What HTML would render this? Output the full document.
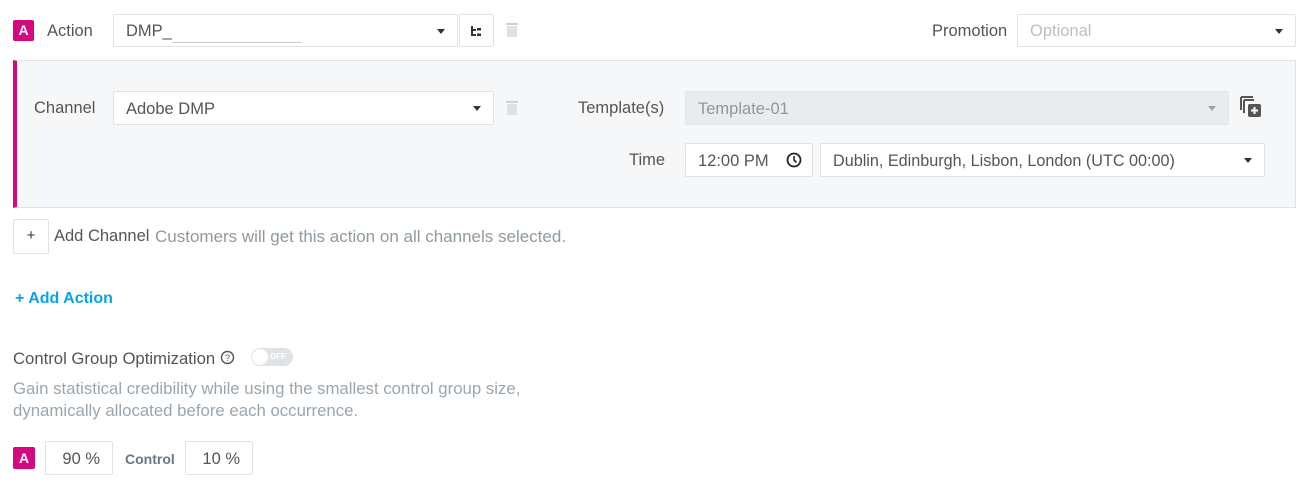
<!DOCTYPE html>
<html><head><style>
*{box-sizing:border-box}
body{margin:0;width:1306px;height:488px;background:#fff;font-family:"Liberation Sans",sans-serif;color:#555;position:relative;overflow:hidden;font-size:16px}
.a{position:absolute}
.badge{background:#d4097f;color:#fff;font-weight:bold;font-size:14px;text-align:center;border-radius:2px}
.sel{position:absolute;border:1px solid #dfe3e6;background:#fff;border-radius:2px;color:#555;padding-left:12px;padding-top:2px;display:flex;align-items:center;font-size:16.5px}
.car{position:absolute;right:12px;top:50%;margin-top:-2px;width:0;height:0;border-left:4px solid transparent;border-right:4px solid transparent;border-top:5px solid #333}
.lbl{position:absolute;font-size:16.5px;color:#555}
</style></head><body>
<div class="a badge" style="left:13px;top:20px;width:21px;height:21px;line-height:21px">A</div>
<div class="lbl" style="left:47px;top:22px">Action</div>
<div class="sel" style="left:113px;top:14px;width:345px;height:33px">DMP_<span style="display:inline-block;width:130px;border-bottom:1px solid #ccc;height:14px;margin-top:8px"></span><div class="car"></div></div>
<div class="a" style="left:459px;top:14px;width:35px;height:33px;border:1px solid #dfe3e6;border-radius:2px">
<svg width="33" height="31" viewBox="0 0 33 31"><path d="M12 11v9h4M12 15h4" stroke="#333" stroke-width="2" fill="none"/><rect x="17" y="13" width="4" height="2.5" fill="#333"/><rect x="17" y="18.5" width="4" height="2.5" fill="#333"/></svg></div>
<svg class="a" style="left:505px;top:22px" width="14" height="16" viewBox="0 0 14 16"><rect x="1" y="1" width="12" height="2" fill="#ccd1d5"/><rect x="2" y="4" width="10" height="11" fill="#dde1e4"/></svg>
<div class="lbl" style="left:932px;top:22px">Promotion</div>
<div class="sel" style="left:1017px;top:14px;width:279px;height:33px;color:#b8bfc5">Optional<div class="car"></div></div>

<div class="a" style="left:13px;top:60px;width:1283px;height:148px;background:#f6f7f8;border:1px solid #dfe3e6;border-left:4px solid #d4097f"></div>
<div class="lbl" style="left:34px;top:99px">Channel</div>
<div class="sel" style="left:113px;top:91px;width:381px;height:34px">Adobe DMP<div class="car"></div></div>
<svg class="a" style="left:505px;top:100px" width="14" height="16" viewBox="0 0 14 16"><rect x="1" y="1" width="12" height="2" fill="#ccd1d5"/><rect x="2" y="4" width="10" height="11" fill="#dde1e4"/></svg>
<div class="lbl" style="left:578px;top:99px">Template(s)</div>
<div class="sel" style="left:685px;top:91px;width:544px;height:34px;background:#e9ecef;border-color:#e3e6e9;color:#8e979e">Template-01<div class="car" style="border-top-color:#9aa2a8"></div></div>
<svg class="a" style="left:1240px;top:96px" width="22" height="22" viewBox="0 0 22 22"><path d="M1 1h12M1 1v13M4 4h10M4 4v13" stroke="#555" stroke-width="2" fill="none"/><rect x="8" y="8" width="13" height="13" rx="2" fill="#555"/><path d="M14.5 11v7M11 14.5h7" stroke="#fff" stroke-width="2"/></svg>
<div class="lbl" style="left:629px;top:151px">Time</div>
<div class="sel" style="left:685px;top:143px;width:128px;height:34px">12:00 PM
<svg class="a" style="right:10px;top:8px" width="16" height="16" viewBox="0 0 16 16"><circle cx="8" cy="8" r="6.5" stroke="#222" stroke-width="1.8" fill="none"/><path d="M8 4v4l2.5 2.5" stroke="#222" stroke-width="1.6" fill="none"/></svg></div>
<div class="sel" style="left:820px;top:143px;width:445px;height:34px;font-size:16.2px">Dublin, Edinburgh, Lisbon, London (UTC 00:00)<div class="car"></div></div>

<div class="a" style="left:13px;top:219px;width:36px;height:35px;border:1px solid #dfe3e6;border-radius:2px;text-align:center;line-height:32px;font-size:15px;color:#333">+</div>
<div class="lbl" style="left:54px;top:227px">Add Channel</div>
<div class="lbl" style="left:155px;top:227px;color:#8e9aa2;font-size:17px">Customers will get this action on all channels selected.</div>
<div class="a" style="left:15px;top:290px;color:#0aa2ea;font-weight:bold;font-size:16px">+ Add Action</div>
<div class="lbl" style="left:13px;top:349px;font-size:16.7px">Control Group Optimization</div>
<svg class="a" style="left:220px;top:350px" width="15" height="15" viewBox="0 0 15 15"><circle cx="7.5" cy="7.5" r="6" stroke="#555" stroke-width="1.4" fill="none"/><text x="7.5" y="11" font-size="9" text-anchor="middle" fill="#555" font-family="Liberation Sans">?</text></svg>
<div class="a" style="left:251px;top:348px;width:42px;height:18px;border-radius:9px;background:#dfe3e6"><div class="a" style="left:1px;top:1px;width:16px;height:16px;border-radius:8px;background:#fff"></div><span class="a" style="left:19px;top:4px;font-size:8px;color:#fff;font-weight:bold">OFF</span></div>
<div class="lbl" style="left:13px;top:378px;color:#9aa6ae;line-height:22px;font-size:16.8px">Gain statistical credibility while using the smallest control group size,<br>dynamically allocated before each occurrence.</div>
<div class="a badge" style="left:13px;top:447px;width:22px;height:22px;line-height:22px">A</div>
<div class="sel" style="left:45px;top:441px;width:68px;height:34px;justify-content:flex-end;padding-right:12px">90 %</div>
<div class="a" style="left:125px;top:451px;font-weight:bold;font-size:14px;color:#6b7880">Control</div>
<div class="sel" style="left:185px;top:441px;width:68px;height:34px;justify-content:flex-end;padding-right:12px">10 %</div>
</body></html>
